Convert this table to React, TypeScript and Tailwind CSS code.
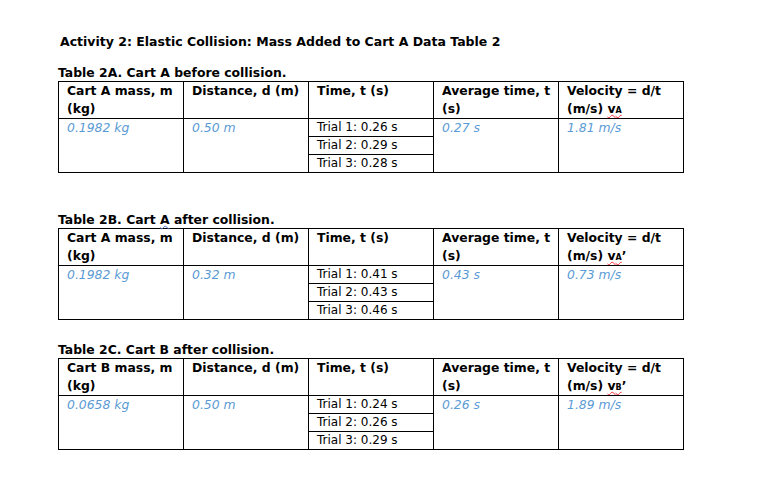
const font = { fontFamily: '"DejaVu Sans", sans-serif' };

type Data = {
  caption: React.ReactNode;
  who: string;
  mass: string;
  dist: string;
  trials: string[];
  avg: string;
  vel: string;
  sub: string;
  prime: boolean;
};

const tables: Data[] = [
  {
    caption: "Table 2A. Cart A before collision.",
    who: "Cart A mass, m",
    mass: "0.1982 kg",
    dist: "0.50 m",
    trials: ["Trial 1: 0.26 s", "Trial 2: 0.29 s", "Trial 3: 0.28 s"],
    avg: "0.27 s",
    vel: "1.81 m/s",
    sub: "A",
    prime: false,
  },
  {
    caption: (
      <>
        Table 2B. Cart{" "}
        <span className="underline decoration-wavy decoration-[#4472c4] decoration-1">A</span>{" "}
        after collision.
      </>
    ),
    who: "Cart A mass, m",
    mass: "0.1982 kg",
    dist: "0.32 m",
    trials: ["Trial 1: 0.41 s", "Trial 2: 0.43 s", "Trial 3: 0.46 s"],
    avg: "0.43 s",
    vel: "0.73 m/s",
    sub: "A",
    prime: true,
  },
  {
    caption: "Table 2C. Cart B after collision.",
    who: "Cart B mass, m",
    mass: "0.0658 kg",
    dist: "0.50 m",
    trials: ["Trial 1: 0.24 s", "Trial 2: 0.26 s", "Trial 3: 0.29 s"],
    avg: "0.26 s",
    vel: "1.89 m/s",
    sub: "B",
    prime: true,
  },
];

function DataTable({ t }: { t: Data }) {
  const head =
    "border border-black align-top pl-2 pr-0 py-0 text-left font-bold text-[12.4px] leading-[18px] h-[36px] whitespace-nowrap overflow-hidden";
  const val = "border border-black align-top px-2 py-0 italic text-[#5b9bd5] text-[12.4px] leading-[18px]";
  return (
    <div>
      <div className="font-bold text-[12.4px] leading-[16px] h-[16px]">{t.caption}</div>
      <table className="border-collapse table-fixed w-[626px]">
        <colgroup>
          <col className="w-[125px]" />
          <col className="w-[125px]" />
          <col className="w-[125px]" />
          <col className="w-[125px]" />
          <col className="w-[125px]" />
        </colgroup>
        <thead>
          <tr>
            <th className={head}>
              {t.who}
              <br />
              (kg)
            </th>
            <th className={head}>Distance, d (m)</th>
            <th className={head}>Time, t (s)</th>
            <th className={head}>
              Average time, t
              <br />
              (s)
            </th>
            <th className={head}>
              Velocity = d/t
              <br />
              (m/s){" "}
              <span className="underline decoration-wavy decoration-red-500 decoration-1">
                v<span className="text-[8px] leading-none">{t.sub}</span>
              </span>
              {t.prime ? "’" : ""}
            </th>
          </tr>
        </thead>
        <tbody>
          {t.trials.map((trial, i) => (
            <tr key={i}>
              {i === 0 && (
                <>
                  <td rowSpan={3} className={val}>{t.mass}</td>
                  <td rowSpan={3} className={val}>{t.dist}</td>
                </>
              )}
              <td className="border border-black px-2 py-0 text-[12px] leading-[17px] h-[17px] whitespace-nowrap">
                {trial}
              </td>
              {i === 0 && (
                <>
                  <td rowSpan={3} className={val}>{t.avg}</td>
                  <td rowSpan={3} className={val}>{t.vel}</td>
                </>
              )}
            </tr>
          ))}
        </tbody>
      </table>
    </div>
  );
}

export default function App() {
  return (
    <div className="w-[763px] h-[478px] bg-white text-black pl-[58px] pt-[34px]" style={font}>
      <h1 className="font-bold text-[12.5px] leading-[16px] pl-[2px] mb-[15px]">
        Activity 2: Elastic Collision: Mass Added to Cart A Data Table 2
      </h1>
      <div className="mb-[39px]">
        <DataTable t={tables[0]} />
      </div>
      <div className="mb-[22px]">
        <DataTable t={tables[1]} />
      </div>
      <DataTable t={tables[2]} />
    </div>
  );
}
